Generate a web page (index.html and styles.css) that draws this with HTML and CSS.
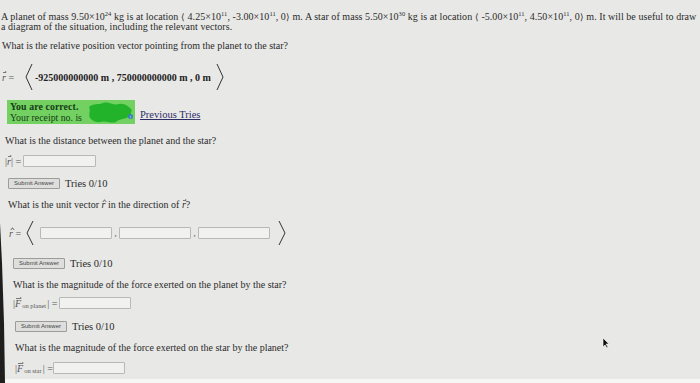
FILE: index.html
```html
<!DOCTYPE html>
<html>
<head>
<meta charset="utf-8">
<link rel="stylesheet" href="styles.css">
</head>
<body>
<div class="page">
  <p class="intro">A planet of mass 9.50×10<sup>24</sup> kg is at location <span class="ang">⟨</span> 4.25×10<sup>11</sup>, -3.00×10<sup>11</sup>, 0<span class="ang">⟩</span> m. A star of mass 5.50×10<sup>30</sup> kg is at location <span class="ang">⟨</span> -5.00×10<sup>11</sup>, 4.50×10<sup>11</sup>, 0<span class="ang">⟩</span> m. It will be useful to draw<br>a diagram of the situation, including the relevant vectors.</p>

  <p class="q q1">What is the relative position vector pointing from the planet to the star?</p>

  <div class="vecrow vr1">
    <span class="lbl"><span class="vec">r</span> =</span>
    <svg class="brk" width="10" height="28" viewBox="0 0 10 28"><polyline points="8,1 2,14 8,27" fill="none" stroke="#333" stroke-width="1"/></svg>
    <span class="ans">-925000000000 m , 750000000000 m , 0 m</span>
    <svg class="brk" width="10" height="28" viewBox="0 0 10 28"><polyline points="2,1 8,14 2,27" fill="none" stroke="#333" stroke-width="1"/></svg>
  </div>

  <div class="feedback">
    <div class="okbox">
      <div class="okl1">You are correct.</div>
      <div class="okl2">Your receipt no. is</div>
      <svg class="scribble" width="46" height="24" viewBox="0 0 46 24"><path d="M2,6 C6,2 12,4 16,2 C22,0 26,5 32,3 C38,2 42,6 45,9 C43,12 45,15 41,16 C37,19 33,17 29,21 C23,23 19,19 13,21 C8,22 5,19 3,17 C1,13 4,10 2,6 Z" fill="#23b32a"/></svg>
      <span class="info">i</span>
    </div>
    <a class="prev">Previous Tries</a>
  </div>

  <p class="q q2">What is the distance between the planet and the star?</p>
  <div class="inrow ir2">
    <span class="lbl">|<span class="vec">r</span>| =</span><span class="box"></span>
  </div>
  <div class="subrow sr2"><span class="btn">Submit Answer</span><span class="tries">Tries 0/10</span></div>

  <p class="q q3">What is the unit vector <span class="hat">r</span> in the direction of <span class="vec">r</span>?</p>
  <div class="vecrow vr2">
    <span class="lbl"><span class="hat">r</span> =</span>
    <svg class="brk" width="10" height="26" viewBox="0 0 10 26"><polyline points="8,1 2,13 8,25" fill="none" stroke="#333" stroke-width="1"/></svg>
    <span class="box"></span><span class="comma">,</span><span class="box"></span><span class="comma">,</span><span class="box"></span>
    <svg class="brk brk-r" width="10" height="26" viewBox="0 0 10 26"><polyline points="2,1 8,13 2,25" fill="none" stroke="#333" stroke-width="1"/></svg>
  </div>
  <div class="subrow sr3"><span class="btn">Submit Answer</span><span class="tries">Tries 0/10</span></div>

  <p class="q q4">What is the magnitude of the force exerted on the planet by the star?</p>
  <div class="inrow ir4">
    <span class="lbl">|<span class="vec">F</span><sub>on planet</sub>| =</span><span class="box"></span>
  </div>
  <div class="subrow sr4"><span class="btn">Submit Answer</span><span class="tries">Tries 0/10</span></div>

  <p class="q q5">What is the magnitude of the force exerted on the star by the planet?</p>
  <div class="inrow ir5">
    <span class="lbl">|<span class="vec">F</span><sub>on star</sub>| =</span><span class="box"></span>
  </div>

  <div class="bottom"></div>
</div>
<svg class="edge" width="8" height="160" viewBox="0 0 8 160"><polygon points="0,0 2,40 4,100 5,160 0,160" fill="#1e1e1e"/></svg>
<svg class="cursor" width="8" height="12" viewBox="0 0 8 12"><path d="M1,1 L1,10 L3,8 L5,11 L6,10 L4,7 L7,7 Z" fill="#111" stroke="#fff" stroke-width="0.6"/></svg>
</body>
</html>
```

FILE: styles.css
```css
html, body {
  margin: 0;
  padding: 0;
}
body {
  width: 700px;
  height: 383px;
  overflow: hidden;
  background: #e8e8e6;
  font-family: "Liberation Serif", "Times New Roman", serif;
  font-size: 10px;
  color: #2b2b2b;
  position: relative;
}
.page {
  display: flex;
  flex-direction: column;
  height: 383px;
  padding-top: 12px;
  box-sizing: border-box;
}
p { margin: 0; }
.intro {
  line-height: 10px;
  padding-left: 1px;
  white-space: nowrap;
  letter-spacing: 0.05px;
}
.intro sup {
  font-size: 6.5px;
  line-height: 0;
  vertical-align: 4px;
}
.ang { font-size: 9px; }
.q { line-height: 10px; }
.q1 { margin-top: 9px; padding-left: 2px; }
.q2 { margin-top: 12px; padding-left: 5px; }
.q3 { margin-top: 11px; padding-left: 8px; }
.q4 { margin-top: 11px; padding-left: 13px; }
.q5 { margin-top: 11px; padding-left: 15px; }

.lbl { color: #555; }
.vec, .hat {
  font-style: italic;
  position: relative;
  display: inline-block;
}
.vec::before {
  content: "";
  position: absolute;
  left: 1px;
  right: 0;
  top: 0;
  border-top: 1px solid #777;
}
.vec::after {
  content: "";
  position: absolute;
  right: -1px;
  top: -1px;
  border-left: 2px solid #777;
  border-top: 1.5px solid transparent;
  border-bottom: 1.5px solid transparent;
}
.hat::before {
  content: "";
  position: absolute;
  left: 1.5px;
  top: 0;
  width: 2px;
  height: 2px;
  border-left: 1px solid #777;
  border-top: 1px solid #777;
  transform: rotate(45deg);
}
sub {
  font-size: 6.5px;
  vertical-align: -1px;
  margin: 0 1px;
}

.vecrow {
  display: flex;
  align-items: center;
}
.vr1 { margin-top: 12px; height: 28px; padding-left: 2px; }
.vr1 .lbl { width: 22px; }
.vr1 .ans { font-weight: bold; font-size: 10px; color: #222; margin: 0 4px 0 1px; }
.vr2 { margin-top: 10px; height: 26px; padding-left: 9px; }
.vr2 .lbl { width: 16px; }
.vr2 .brk { margin-right: 5px; }
.vr2 .brk-r { margin-left: 7px; }
.comma { width: 7px; text-align: center; font-size: 9px; color: #555; }

.box {
  display: inline-block;
  width: 70px;
  height: 10px;
  border: 1px solid #b8b8b6;
  background: #f1f1ef;
  border-radius: 1px;
}

.feedback {
  display: flex;
  align-items: center;
  margin-top: 9px;
  padding-left: 7px;
}
.okbox {
  position: relative;
  width: 128px;
  height: 24px;
  box-sizing: border-box;
  padding: 1px 0 0 3px;
  background: #72d161;
  font-size: 9.8px;
  line-height: 11px;
  color: #173c17;
}
.okl1 { font-weight: bold; letter-spacing: 0.1px; }
.scribble {
  position: absolute;
  left: 80px;
  top: 1px;
}
.info {
  position: absolute;
  left: 121px;
  top: 14px;
  width: 5px;
  height: 5px;
  border-radius: 50%;
  background: #3a7fc0;
  color: #fff;
  font-size: 4px;
  line-height: 5px;
  text-align: center;
  font-family: "Liberation Sans", sans-serif;
}
.prev {
  margin-left: 5px;
  margin-top: 5px;
  font-size: 10.5px;
  color: #2c2c66;
  text-decoration: underline;
}

.inrow {
  display: flex;
  align-items: center;
  height: 12px;
}
.inrow .lbl { margin-right: 2px; }
.ir2 { margin-top: 9px; padding-left: 5px; }
.ir2 .box { width: 71px; }
.ir4 { margin-top: 7px; padding-left: 13px; }
.ir5 { margin-top: 9px; padding-left: 15px; }
.ir5 .lbl { margin-right: 0; }

.subrow {
  display: flex;
  align-items: center;
  height: 11px;
}
.sr2 { margin-top: 11px; padding-left: 8px; }
.sr3 { margin-top: 12px; padding-left: 13px; }
.sr4 { margin-top: 12px; padding-left: 15px; }
.btn {
  display: inline-block;
  height: 9px;
  width: 50px;
  box-sizing: content-box;
  border: 1px solid #9c9c9a;
  background: #dededc;
  font-family: "Liberation Sans", Arial, sans-serif;
  font-size: 6px;
  line-height: 9px;
  text-align: center;
  color: #444;
  border-radius: 1px;
}
.tries { margin-left: 5px; font-size: 10.5px; }

.bottom {
  margin-top: auto;
  height: 4px;
  background: #f6f6f5;
}
.edge {
  position: absolute;
  left: 0;
  top: 223px;
}
.cursor {
  position: absolute;
  left: 602px;
  top: 337px;
}
```
